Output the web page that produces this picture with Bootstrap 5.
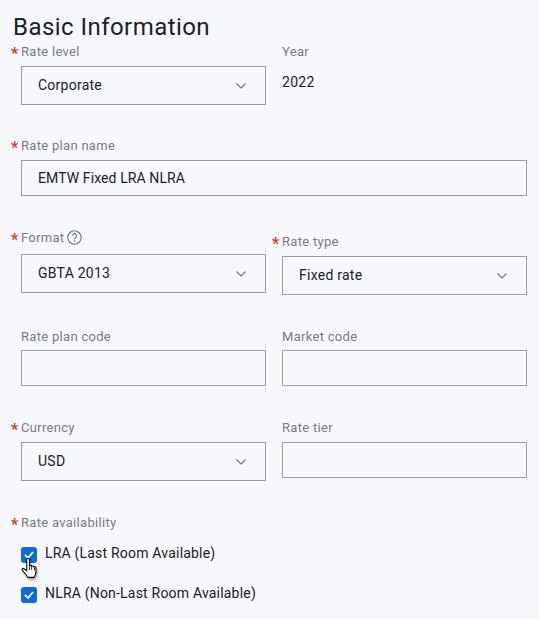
<!DOCTYPE html>
<html lang="en">
<head>
<meta charset="utf-8">
<title>Basic Information</title>
<link rel="stylesheet" href="https://cdn.jsdelivr.net/npm/bootstrap@5.3.0/dist/css/bootstrap.min.css">
<style>
html,body{height:100%;overflow:hidden}
body{background:#f7f8fb;font-family:Roboto,"Liberation Sans",sans-serif;color:#1c2127}
.sheet{padding:0 12px 0 21px}
.heading{font-size:24px;font-weight:400;line-height:28px;margin:13px 0 0 -8px;letter-spacing:.45px}
.fld-label{display:block;font-size:13px;line-height:16px;color:#777c87;margin:0 0 6px;letter-spacing:.3px;white-space:nowrap}
.fld-label-tall{margin-bottom:8px}
.fld-label-plain{padding-top:1px;margin-bottom:5px}
.fld-label-tier{padding-top:1px;margin-bottom:6px}
.req{color:#e8391c;display:inline-block;width:10px;margin-left:-10px;font-size:16px;font-weight:700;line-height:16px;position:relative;top:3px}
.fld-box{border:1px solid #9a9ea9;height:39px;background:transparent;display:flex;align-items:center;justify-content:space-between;padding:0 19px 0 16px;font-size:14px;letter-spacing:.25px;color:#1c2127}
.fld-short{height:36px}
.fld-name{letter-spacing:.1px}
.val{font-size:14px;line-height:18px;margin-top:13px;letter-spacing:.3px}
.r1{margin-top:2px}.r2{margin-top:32px}.r3{margin-top:33px}.r4{margin-top:33px}.r5{margin-top:33px}.r6{margin-top:33px}
.rt{margin-top:4px}
.hint{margin:-2px 0 0 3px;vertical-align:middle}
.tick{width:16px;height:16px;border-radius:3px;background:#0b6be3;flex:none;display:flex;align-items:center;justify-content:center}
.opt{font-size:14px;line-height:18px;letter-spacing:.2px;gap:8px;display:flex;align-items:center}
.opt span.up1{margin-bottom:3px}
.opt span.up2{margin-bottom:3px}
.opts{position:relative;margin-top:13px}
.opt+.opt{margin-top:19px}
.hand{position:absolute;left:0;top:14px;filter:drop-shadow(1px 2px 1px rgba(0,0,0,.35))}
</style>
</head>
<body>
<main class="sheet">
<h1 class="heading">Basic Information</h1>
<div class="row gx-3 r1">
<div class="col-6"><label class="fld-label"><span class="req">*</span>Rate level</label>
<div class="fld-box">Corporate<svg width="10" height="6" viewBox="0 0 10 6"><path d="M.5.5l4.500 4.500 4.500-4.500" fill="none" stroke="#6f7580" stroke-width="1.100"/></svg></div></div>
<div class="col-6"><label class="fld-label fld-label-plain">Year</label><div class="val">2022</div></div>
</div>
<div class="row gx-3 r2">
<div class="col-12"><label class="fld-label"><span class="req">*</span>Rate plan name</label>
<div class="fld-box fld-short fld-name">EMTW Fixed LRA NLRA</div></div>
</div>
<div class="row gx-3 r3">
<div class="col-6"><label class="fld-label fld-label-tall"><span class="req">*</span>Format<svg class="hint" width="15" height="15" viewBox="0 0 15 15"><circle cx="7.500" cy="7.500" r="6.700" fill="none" stroke="#6f7580" stroke-width="1.100"/><path d="M5.400 5.800a2.100 2.100 0 1 1 3.300 1.700c-.8.500-1.200.9-1.200 1.800" fill="none" stroke="#6f7580" stroke-width="1.100"/><circle cx="7.500" cy="11.100" r=".8" fill="#6f7580"/></svg></label>
<div class="fld-box">GBTA 2013<svg width="10" height="6" viewBox="0 0 10 6"><path d="M.5.5l4.500 4.500 4.500-4.500" fill="none" stroke="#6f7580" stroke-width="1.100"/></svg></div></div>
<div class="col-6 rt"><label class="fld-label"><span class="req">*</span>Rate type</label>
<div class="fld-box">Fixed rate<svg width="10" height="6" viewBox="0 0 10 6"><path d="M.5.5l4.500 4.500 4.500-4.500" fill="none" stroke="#6f7580" stroke-width="1.100"/></svg></div></div>
</div>
<div class="row gx-3 r4">
<div class="col-6"><label class="fld-label fld-label-plain">Rate plan code</label><div class="fld-box fld-short"></div></div>
<div class="col-6"><label class="fld-label fld-label-plain">Market code</label><div class="fld-box fld-short"></div></div>
</div>
<div class="row gx-3 r5">
<div class="col-6"><label class="fld-label"><span class="req">*</span>Currency</label>
<div class="fld-box">USD<svg width="10" height="6" viewBox="0 0 10 6"><path d="M.5.5l4.500 4.500 4.500-4.500" fill="none" stroke="#6f7580" stroke-width="1.100"/></svg></div></div>
<div class="col-6"><label class="fld-label fld-label-tier">Rate tier</label><div class="fld-box fld-short"></div></div>
</div>
<div class="r6">
<label class="fld-label"><span class="req">*</span>Rate availability</label>
<div class="opts">
<div class="opt"><span class="tick"><svg width="10" height="8" viewBox="0 0 10 8"><path d="M1 4l3 3 5-6" fill="none" stroke="#fff" stroke-width="1.800"/></svg></span><span class="up1">LRA (Last Room Available)</span></div>
<div class="opt"><span class="tick"><svg width="10" height="8" viewBox="0 0 10 8"><path d="M1 4l3 3 5-6" fill="none" stroke="#fff" stroke-width="1.800"/></svg></span><span class="up2">NLRA (Non-Last Room Available)</span></div>
<svg class="hand" width="17" height="21" viewBox="1 1 15 19"><path d="M6 2c1-1 2-1 2.500 0v6l1-.3c.7 0 1 .4 1 .8.8-.6 1.900-.3 2 .5.800-.4 1.800 0 1.800 1v4c0 2-1 3.500-2 4.500H7c-1-2-3-4-5-6.500-.7-1 .5-2 1.500-1.300L6 12.500V2z" fill="#fff" stroke="#111" stroke-width="1"/><path d="M8.500 9v3M10.500 9v3M13 9.500V12" stroke="#111" stroke-width=".8"/></svg>
</div>
</div>
</main>
<script src="https://cdn.jsdelivr.net/npm/bootstrap@5.3.0/dist/js/bootstrap.bundle.min.js"></script>
</body>
</html>
